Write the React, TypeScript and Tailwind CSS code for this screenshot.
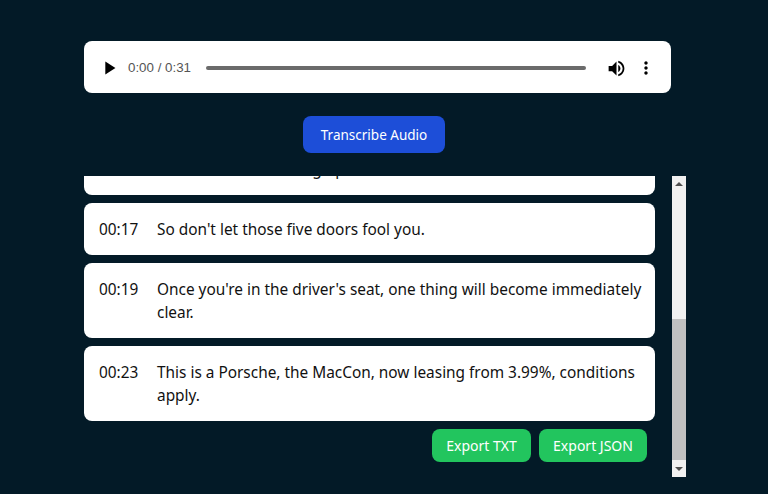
type Segment = { time: string; text: string };

const segments: Segment[] = [
  { time: "00:15", text: "The turbo is also at high power." },
  { time: "00:17", text: "So don't let those five doors fool you." },
  { time: "00:19", text: "Once you're in the driver's seat, one thing will become immediately clear." },
  { time: "00:23", text: "This is a Porsche, the MacCon, now leasing from 3.99%, conditions apply." },
];

export default function App() {
  return (
    <div className="h-[494px] overflow-hidden bg-[#031a27] pt-[41px] pl-[84px] font-['Noto_Sans',sans-serif]">
      <div className="flex h-[52px] w-[587px] items-center rounded-lg bg-white pt-[2px] pl-[14px] pr-[15px]">
        <svg width="22" height="22" viewBox="0 0 24 24" fill="#000">
          <path d="M8 5v14l11-7z" />
        </svg>
        <span className="ml-[8px] font-['Liberation_Sans',sans-serif] text-[13.33px] text-[#555]">0:00 / 0:31</span>
        <div className="ml-[15px] h-[4px] flex-1 rounded-full bg-[#6b6b6b]" />
        <svg width="21" height="21" viewBox="0 0 24 24" fill="#000" className="ml-[20px]">
          <path d="M3 9v6h4l5 5V4L7 9H3zm13.5 3c0-1.77-1.02-3.29-2.5-4.03v8.05c1.48-.73 2.5-2.25 2.5-4.02zM14 3.23v2.06c2.89.86 5 3.54 5 6.71s-2.11 5.85-5 6.71v2.06c4.01-.91 7-4.49 7-8.77s-2.99-7.86-7-8.77z" />
        </svg>
        <svg width="20" height="20" viewBox="0 0 24 24" fill="#000" className="ml-[9px]">
          <path d="M12 8c1.1 0 2-.9 2-2s-.9-2-2-2-2 .9-2 2 .9 2 2 2zm0 2c-1.1 0-2 .9-2 2s.9 2 2 2 2-.9 2-2-.9-2-2-2zm0 6c-1.1 0-2 .9-2 2s.9 2 2 2 2-.9 2-2-.9-2-2-2z" />
        </svg>
      </div>

      <div className="mt-[23px] flex w-[580px] justify-center">
        <button className="h-[37px] w-[142px] rounded-lg bg-[#1d4ed8] pt-px text-[13.5px] text-white">Transcribe Audio</button>
      </div>

      <div className="mt-[23px] flex h-[301px] w-[602px]">
        <div className="flex w-[588px] flex-col justify-end overflow-hidden">
          <div className="flex shrink-0 flex-col gap-2 pr-[17px]">
            {segments.map((s) => (
              <div key={s.time} className="flex rounded-lg bg-white pt-[15px] pr-[8px] pb-[14px] pl-[15px] text-[15.4px] leading-[23px] text-[#111]">
                <span className="w-[58px] shrink-0">{s.time}</span>
                <span>{s.text}</span>
              </div>
            ))}
          </div>
          <div className="mt-2 flex shrink-0 justify-end gap-2 pr-[25px] pb-[15px]">
            <button className="h-[33px] w-[99px] rounded-lg bg-[#22c55e] text-[14px] text-white">Export TXT</button>
            <button className="h-[33px] w-[108px] rounded-lg bg-[#22c55e] text-[14px] text-white">Export JSON</button>
          </div>
        </div>
        <div className="flex w-[14px] flex-col bg-[#f1f1f1]">
          <div className="flex h-[16px] items-center justify-center">
            <div className="h-0 w-0 border-x-[4px] border-b-[4px] border-x-transparent border-b-[#505050]" />
          </div>
          <div className="mt-[127px] h-[141px] bg-[#c1c1c1]" />
          <div className="mt-auto flex h-[16px] items-center justify-center">
            <div className="h-0 w-0 border-x-[4px] border-t-[4px] border-x-transparent border-t-[#505050]" />
          </div>
        </div>
      </div>
    </div>
  );
}
